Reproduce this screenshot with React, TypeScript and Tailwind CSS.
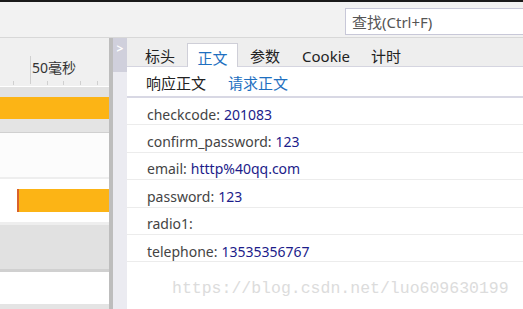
import React from "react";

const rows: [string, string][] = [
  ["checkcode", "201083"],
  ["confirm_password", "123"],
  ["email", "htttp%40qq.com"],
  ["password", "123"],
  ["radio1", ""],
  ["telephone", "13535356767"],
];

export default function App() {
  const font = { fontFamily: '"Noto Sans", "Noto Sans CJK SC", sans-serif' };
  return (
    <div className="w-[523px] h-[309px] overflow-hidden flex flex-col bg-white" style={font}>
      <div className="h-[2px] bg-[#1a1a1a]" />
      <div className="h-[36px] bg-[#f2f2f2] border-b border-[#d8d8d8] flex items-start justify-end">
        <div className="mt-[6px] w-[178px] h-[27px] bg-white border border-[#c8c8d8] border-r-0 flex items-center pl-[6px] pt-[2px] text-[15px] text-[#555] leading-none">
          查找(Ctrl+F)
        </div>
      </div>
      <div className="flex flex-1 min-h-0">
        {/* left panel */}
        <div className="w-[109px] flex flex-col">
          <div className="h-[48px] bg-[#f0f0f0] relative">
            <div className="absolute left-[30px] top-[18px] w-px h-[28px] bg-[#d0d0d0]" />
            <div className="absolute left-[32px] top-[20px] text-[14px] text-[#333] leading-[20px]">50毫秒</div>
            {[13, 47, 63, 80, 97].map((x) => (
              <div key={x} className="absolute top-[43px] w-px h-[4px] bg-[#d0d0d0]" style={{ left: x }} />
            ))}
          </div>
          <div className="h-px bg-white" />
          <div className="h-[10px] bg-[#e2e2e2]" />
          <div className="h-[22px] bg-[#fcb415]" />
          <div className="h-[13px] bg-[#e4e4e4]" />
          <div className="h-px bg-[#d0d0d0]" />
          <div className="h-[44px] bg-[#fcfcfc]" />
          <div className="h-[2px] bg-[#eeeeee]" />
          <div className="h-[43px] bg-white pt-[10px]">
            <div className="ml-[17px] h-[23px] bg-[#fcb415] border-l-2 border-[#d9622b]" />
          </div>
          <div className="h-[3px] bg-[#eeeeee]" />
          <div className="h-[44px] bg-[#e1e1e1]" />
          <div className="h-[3px] bg-[#d0d0d0]" />
          <div className="h-[32px] bg-white" />
          <div className="flex-1 bg-[#e4e4e4]" />
        </div>
        <div className="w-[4px] bg-[#bdbdbd]" />
        <div className="w-[14px] bg-[#ebebf1] flex flex-col">
          <div className="h-[34px] bg-[#d0d0dc] flex items-start justify-center pt-[5px] text-[12px] text-white leading-none font-bold">
            &gt;
          </div>
        </div>
        {/* right panel */}
        <div className="flex-1 flex flex-col relative">
          <div className="h-[29px] shrink-0 bg-[#eeeeee] border-b border-[#d5d5e0] flex items-end text-[15px] text-[#222] leading-none">
            <div className="ml-[18px] h-[24px] pt-[5px] flex items-center">标头</div>
            <div className="ml-[12px] w-[51px] h-[24px] pt-[5px] bg-white border border-[#cfcfd8] border-b-0 -mb-px flex items-center justify-center text-[#1e6fc0]">
              正文
            </div>
            <div className="ml-[12px] h-[24px] pt-[5px] flex items-center">参数</div>
            <div className="ml-[22px] h-[24px] pt-[5px] flex items-center">Cookie</div>
            <div className="ml-[21px] h-[24px] pt-[5px] flex items-center">计时</div>
          </div>
          <div className="h-[31px] shrink-0 pt-[4px] border-b-2 border-[#d8d8e4] flex items-center text-[15px] leading-none">
            <span className="ml-[19px] text-[#222]">响应正文</span>
            <span className="ml-[22px] text-[#1e6fc0]">请求正文</span>
          </div>
          {rows.map(([k, v]) => (
            <div key={k} className="h-[27.4px] shrink-0 pt-[7px] border-b border-[#ececec] flex items-center pl-[20px] text-[14px] leading-none">
              <span className="text-[#444]">{k}:</span>
              {v && <span className="ml-[4px] text-[#1c1c8a]">{v}</span>}
            </div>
          ))}
          <div
            className="absolute left-[45px] top-[243px] text-[16.5px] text-[#dcdcdc] leading-none whitespace-nowrap"
            style={{ fontFamily: '"Liberation Mono", monospace' }}
          >
            https://blog.csdn.net/luo609630199
          </div>
        </div>
      </div>
    </div>
  );
}
